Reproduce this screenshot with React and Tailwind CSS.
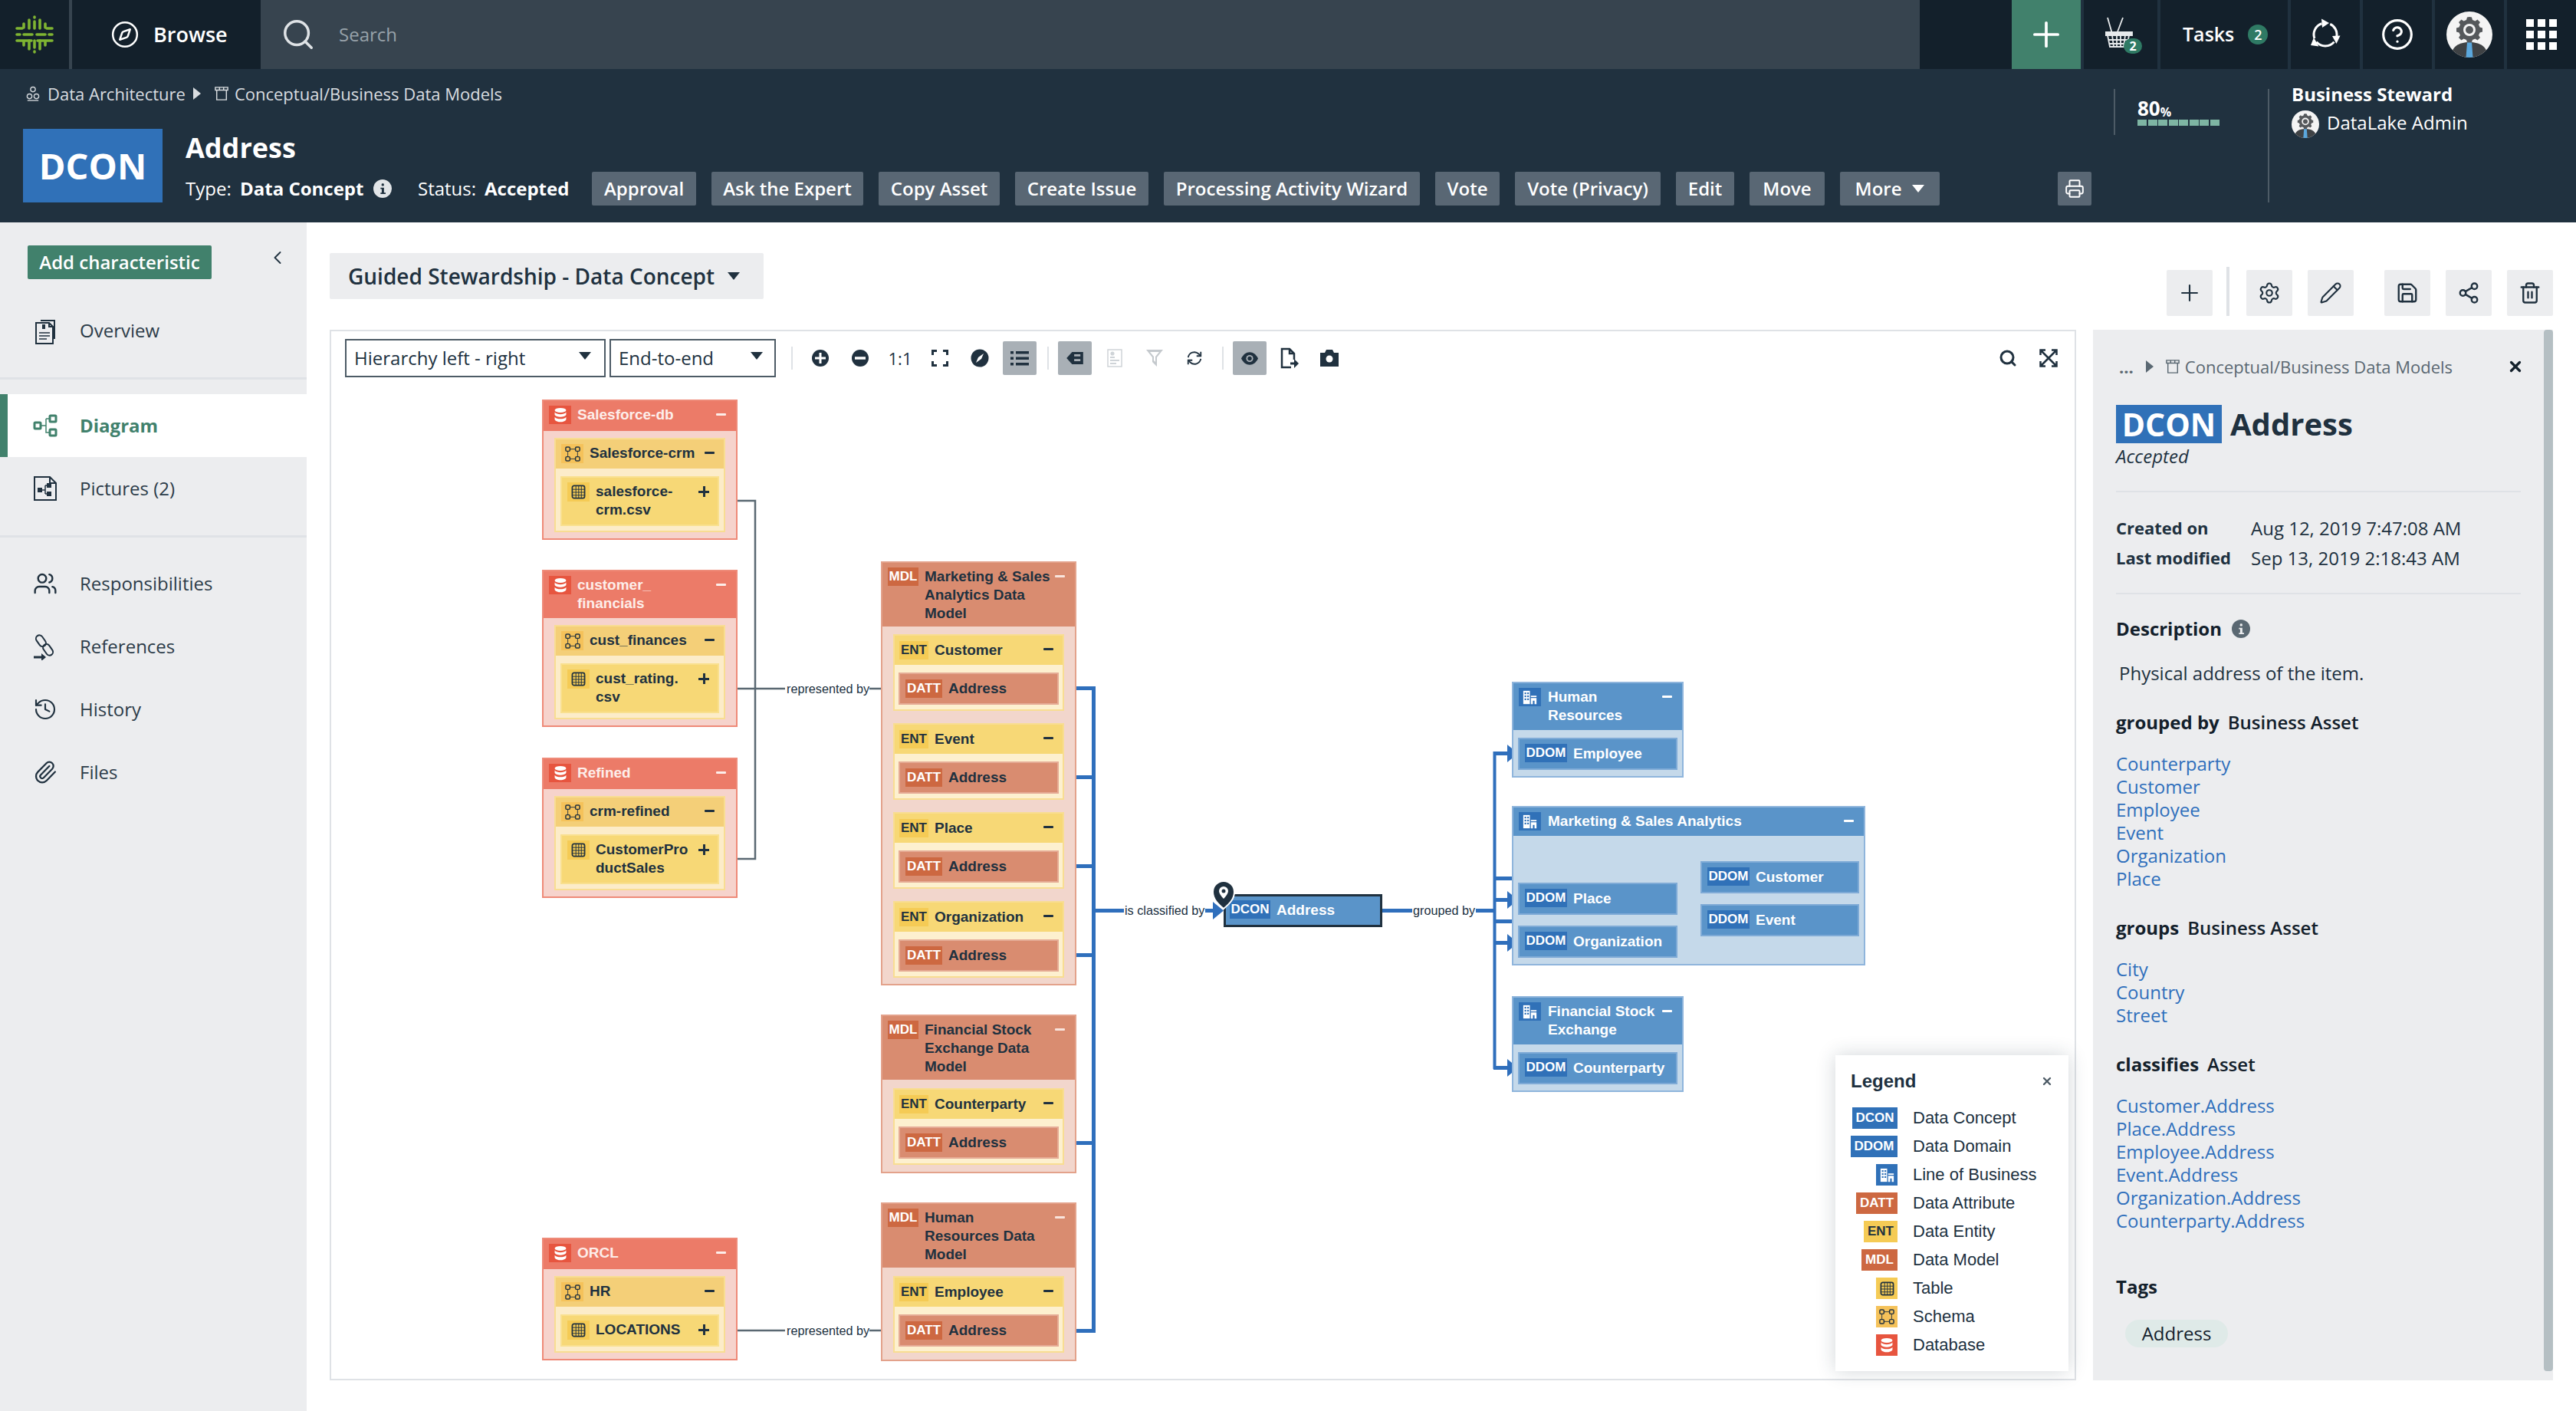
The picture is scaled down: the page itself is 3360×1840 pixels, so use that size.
import React from "react";
import {
  Compass, Search, Plus, CircleHelp, Printer, ChevronLeft, Settings, Pencil, Save, Share2, Trash2, X,
  Users, History, Paperclip,
} from "lucide-react";

const Dash = ({ cls }) => <span className={`block h-[3px] w-[13px] shrink-0 rounded-[1px] ${cls}`} />;

const CrossMark = ({ cls }) => (
  <span className={`relative block h-[14px] w-[14px] shrink-0 ${cls}`}>
    <span className="absolute left-0 top-[6px] h-[2.5px] w-[14px] bg-current" />
    <span className="absolute left-[6px] top-0 h-[14px] w-[2.5px] bg-current" />
  </span>
);

const DbGlyph = () => (
  <svg viewBox="0 0 20 24" className="h-[21px] w-[18px]">
    <g fill="#fff">
      <ellipse cx="10" cy="4.5" rx="8.5" ry="3.5" />
      <path d="M1.5 7.5c1.5 2 5 3 8.5 3s7-1 8.500-3v4c-1.500 2-5 3-8.500 3s-7-1-8.500-3z" />
      <path d="M1.500 14.500c1.500 2 5 3 8.500 3s7-1 8.500-3v4c-1.500 2.500-5 3.500-8.500 3.500s-7-1-8.500-3.500z" />
    </g>
  </svg>
);

const TableGlyph = () => (
  <svg viewBox="0 0 20 20" className="h-[19px] w-[19px]" fill="none" stroke="#20313f" strokeWidth="1">
    <rect x="1.500" y="1.500" width="17" height="17" rx="2.500" strokeWidth="1.800" />
    <path d="M1.500 6.500h17M1.500 10.500h17M1.500 14.500h17M6.500 1.500v17M10.300 1.500v17M14 1.500v17" />
  </svg>
);

const SchemaGlyph = () => (
  <svg viewBox="0 0 22 22" className="h-[20px] w-[20px]" fill="none" stroke="#20313f" strokeWidth="1.600">
    <rect x="1" y="1" width="6" height="6" rx="1.500" />
    <rect x="15" y="1" width="6" height="6" rx="1.500" />
    <rect x="1" y="15" width="6" height="6" rx="1.500" />
    <rect x="15" y="15" width="6" height="6" rx="1.500" />
    <path d="M7 4h8M7 18h8M4 7v8M18 7v8" strokeWidth="1" />
  </svg>
);

const LobGlyph = () => (
  <svg viewBox="0 0 22 22" className="h-[19px] w-[19px]" fill="#fff">
    <path d="M1 1h10v20H1z" />
    <path d="M12.500 8.500H21v2h-8.500zM12.500 12H21v9h-3v-5h-2.500v5h-3z" />
    <g fill="#3071b8">
      <rect x="3" y="3.500" width="2.500" height="2.500" />
      <rect x="7" y="3.500" width="2.500" height="2.500" />
      <rect x="3" y="8" width="2.500" height="2.500" />
      <rect x="7" y="8" width="2.500" height="2.500" />
      <rect x="3" y="12.500" width="2.500" height="2.500" />
      <rect x="7" y="12.500" width="2.500" height="2.500" />
    </g>
  </svg>
);

const Lines = ({ items }) => items.map((l) => <div key={l} className="whitespace-nowrap">{l}</div>);

const DbNode = ({ pos, lines, schema, table }) => (
  <div className={`absolute ${pos} w-[255px] border-2 border-[#ee8a78] bg-[#f6d3cc]`}>
    <div className="flex min-h-[39px] items-start bg-[#ec7b68] pb-[7px] pl-[7px] pr-[13px] pt-[6px]">
      <span className="flex h-[24px] w-[29px] shrink-0 items-center justify-center bg-[#e7553f]"><DbGlyph /></span>
      <div className="ml-[8px] flex-1 text-[19px] font-bold leading-[24px] text-[#fdeeea]"><Lines items={lines} /></div>
      <Dash cls="mt-[10px] bg-[#fdeeea]" />
    </div>
    <div className="px-[14px] pb-[8px] pt-[9px]">
      <div className="border-2 border-[#f8dd92] bg-[#fcecc9]">
        <div className="flex h-[38px] items-start bg-[#f4cf78] pl-[7px] pr-[12px] pt-[6px]">
          <span className="flex h-[25px] w-[29px] shrink-0 items-center justify-center bg-[#f5c25a]"><SchemaGlyph /></span>
          <span className="ml-[8px] flex-1 whitespace-nowrap text-[19px] font-bold leading-[24px] text-[#20313f]">{schema}</span>
          <Dash cls="mt-[10px] bg-[#20313f]" />
        </div>
        <div className="px-[6px] pb-[6px] pt-[10px]">
          <div className="flex items-start border-2 border-[#f9e08f] bg-[#f7d876] pb-[7px] pl-[7px] pr-[11px] pt-[6px]">
            <span className="flex h-[25px] w-[29px] shrink-0 items-center justify-center bg-[#f5cb55]"><TableGlyph /></span>
            <div className="ml-[8px] flex-1 text-[19px] font-bold leading-[24px] text-[#20313f]"><Lines items={table} /></div>
            <CrossMark cls="mt-[5px] text-[#20313f]" />
          </div>
        </div>
      </div>
    </div>
  </div>
);

const Ent = ({ name }) => (
  <div className="border-2 border-[#f8dd92] bg-[#fdf0cf]">
    <div className="flex h-[38px] items-start bg-[#f7d876] pl-[6px] pr-[12px] pt-[7px]">
      <span className="flex h-[24px] w-[38px] shrink-0 items-center justify-center bg-[#f5cb55] text-[17px] font-bold text-[#20313f]">ENT</span>
      <span className="ml-[8px] flex-1 text-[19px] font-bold leading-[23px] text-[#20313f]">{name}</span>
      <Dash cls="mt-[9px] bg-[#20313f]" />
    </div>
    <div className="px-[5px] pb-[6px] pt-[10px]">
      <div className="flex h-[42px] items-start border-2 border-[#e5ab95] bg-[#d98c70] pl-[7px] pt-[7px]">
        <span className="flex h-[24px] w-[48px] shrink-0 items-center justify-center bg-[#cd6841] text-[17px] font-bold text-white">DATT</span>
        <span className="ml-[8px] text-[19px] font-bold leading-[23px] text-[#20313f]">Address</span>
      </div>
    </div>
  </div>
);

const MdlNode = ({ pos, lines, ents, bodyCls }) => (
  <div className={`absolute ${pos} w-[255px] border-2 border-[#e3a28b] bg-[#f2d6cc]`}>
    <div className="flex items-start bg-[#d98c70] pb-[5px] pl-[7px] pr-[13px] pt-[6px]">
      <span className="flex h-[24px] w-[40px] shrink-0 items-center justify-center bg-[#cd6841] text-[17px] font-bold text-white">MDL</span>
      <div className="ml-[8px] flex-1 text-[19px] font-bold leading-[24px] text-[#20313f]"><Lines items={lines} /></div>
      <Dash cls="mt-[10px] bg-[#f9e4dc]" />
    </div>
    <div className={`flex flex-col gap-[16px] px-[14px] pb-[8px] pt-[10px] ${bodyCls}`}>
      {ents.map((e) => <Ent key={e} name={e} />)}
    </div>
  </div>
);

const Ddom = ({ name, cls }) => (
  <div className={`flex h-[42px] items-start border-2 border-[#7eaad6] bg-[#5a94c9] pl-[7px] pt-[6px] ${cls}`}>
    <span className="flex h-[24px] w-[55px] shrink-0 items-center justify-center bg-[#3071b8] text-[17px] font-bold text-white">DDOM</span>
    <span className="ml-[8px] text-[19px] font-bold leading-[25px] text-white">{name}</span>
  </div>
);

const LobHead = ({ lines }) => (
  <div className="flex items-start bg-[#5a94c9] pb-[7px] pl-[7px] pr-[13px] pt-[6px]">
    <span className="flex h-[24px] w-[29px] shrink-0 items-center justify-center bg-[#3071b8]"><LobGlyph /></span>
    <div className="ml-[9px] flex-1 text-[19px] font-bold leading-[24px] text-white"><Lines items={lines} /></div>
    <Dash cls="mt-[10px] bg-white" />
  </div>
);

const LobNode = ({ pos, lines, item }) => (
  <div className={`absolute ${pos} w-[224px] border-2 border-[#8fb5dc] bg-[#c5d9ea]`}>
    <LobHead lines={lines} />
    <div className="px-[6px] pb-[8px] pt-[10px]"><Ddom name={item} cls="w-[208px]" /></div>
  </div>
);

const Edges = () => (
  <svg viewBox="432 432 2274 1366" className="absolute left-0 top-0 h-[1366px] w-[2274px]" fill="none">
    <g stroke="#5a6872" strokeWidth="2.500">
      <path d="M938 653H985V1120H938" />
      <path d="M938 898H1024M1134 898H1160" />
      <path d="M938 1735H1024M1134 1735H1160" />
    </g>
    <g fill="#5a6872">
      <path d="M1157 888L1172 898L1157 908Z" />
      <path d="M1157 1725L1172 1735L1157 1745Z" />
    </g>
    <g fill="#2f6fbc">
      <rect x="1380" y="895" width="48" height="5" />
      <rect x="1380" y="1011" width="48" height="5" />
      <rect x="1380" y="1127" width="48" height="5" />
      <rect x="1380" y="1243" width="48" height="5" />
      <rect x="1380" y="1488" width="48" height="5" />
      <rect x="1380" y="1733" width="48" height="5" />
      <rect x="1424" y="895" width="5" height="843" />
      <rect x="1427" y="1185" width="39" height="5" />
      <rect x="1572" y="1185" width="12" height="5" />
      <path d="M1582 1176L1596 1187.500L1582 1199Z" />
      <rect x="1803" y="1185" width="39" height="5" />
      <rect x="1925" y="1185" width="25" height="5" />
      <rect x="1947.500" y="980" width="4" height="414" />
      <rect x="1948" y="980" width="20" height="5" />
      <path d="M1966 971L1980 982.500L1966 994Z" />
      <rect x="1948" y="1171" width="20" height="5" />
      <path d="M1966 1162L1980 1173.500L1966 1185Z" />
      <rect x="1948" y="1227" width="20" height="5" />
      <path d="M1966 1218L1980 1229.500L1966 1241Z" />
      <rect x="1948" y="1390" width="20" height="5" />
      <path d="M1966 1381L1980 1392.500L1966 1404Z" />
      <rect x="1948" y="1143" width="258" height="5" />
      <path d="M2204 1134L2218 1145.500L2204 1157Z" />
      <rect x="1948" y="1199" width="258" height="5" />
      <path d="M2204 1190L2218 1201.500L2204 1213Z" />
    </g>
    <g fontSize="16.200" fill="#20313f" stroke="none">
      <text x="1026" y="904">represented by</text>
      <text x="1026" y="1741">represented by</text>
      <text x="1467" y="1193">is classified by</text>
      <text x="1843" y="1193">grouped by</text>
    </g>
  </svg>
);

const LegendBadge = ({ cls, children }) => (
  <span className={`flex h-[28px] items-center justify-center text-[17px] font-bold ${cls}`}>{children}</span>
);

const Legend = () => {
  const rows = [
    ["Data Concept", <LegendBadge cls="w-[59px] bg-[#3071b8] text-white">DCON</LegendBadge>],
    ["Data Domain", <LegendBadge cls="w-[61px] bg-[#3071b8] text-white">DDOM</LegendBadge>],
    ["Line of Business", <LegendBadge cls="w-[28px] bg-[#3071b8]"><LobGlyph /></LegendBadge>],
    ["Data Attribute", <LegendBadge cls="w-[54px] bg-[#cd6841] text-white">DATT</LegendBadge>],
    ["Data Entity", <LegendBadge cls="w-[44px] bg-[#f5cb55] text-[#20313f]">ENT</LegendBadge>],
    ["Data Model", <LegendBadge cls="w-[47px] bg-[#cd6841] text-white">MDL</LegendBadge>],
    ["Table", <LegendBadge cls="w-[28px] bg-[#f5cb55]"><TableGlyph /></LegendBadge>],
    ["Schema", <LegendBadge cls="w-[28px] bg-[#f5c25a]"><SchemaGlyph /></LegendBadge>],
    ["Database", <LegendBadge cls="w-[28px] bg-[#e7553f]"><DbGlyph /></LegendBadge>],
  ];
  return (
    <div className="absolute left-[1962px] top-[944px] h-[412px] w-[304px] bg-white px-[20px] pt-[19px] shadow-[0_0_24px_rgba(32,49,63,0.2)]">
      <div className="flex items-center justify-between">
        <span className="text-[24px] font-bold leading-[30px] text-[#20313f]">Legend</span>
        <X size={16} strokeWidth={3.500} className="text-[#4d5b66]" />
      </div>
      <div className="mt-[19px] flex flex-col gap-[9px]">
        {rows.map(([t, b]) => (
          <div key={t} className="flex h-[28px] items-center">
            <div className="flex w-[61px] justify-end">{b}</div>
            <span className="ml-[20px] text-[22px] leading-[28px] text-[#20313f]">{t}</span>
          </div>
        ))}
      </div>
    </div>
  );
};

const Canvas = () => (
  <div className="font-['Liberation_Sans',Arial,sans-serif]">
    <Edges />
    <DbNode pos="left-[275px] top-[89px]" lines={["Salesforce-db"]} schema="Salesforce-crm" table={["salesforce-", "crm.csv"]} />
    <DbNode pos="left-[275px] top-[311px]" lines={["customer_", "financials"]} schema="cust_finances" table={["cust_rating.", "csv"]} />
    <DbNode pos="left-[275px] top-[556px]" lines={["Refined"]} schema="crm-refined" table={["CustomerPro", "ductSales"]} />
    <DbNode pos="left-[275px] top-[1182px]" lines={["ORCL"]} schema="HR" table={["LOCATIONS"]} />
    <MdlNode pos="left-[717px] top-[300px]" lines={["Marketing & Sales", "Analytics Data", "Model"]} ents={["Customer", "Event", "Place", "Organization"]} />
    <MdlNode pos="left-[717px] top-[891px]" bodyCls="pt-[11px] pb-[9px]" lines={["Financial Stock", "Exchange Data", "Model"]} ents={["Counterparty"]} />
    <MdlNode pos="left-[717px] top-[1136px]" bodyCls="pt-[11px] pb-[9px]" lines={["Human", "Resources Data", "Model"]} ents={["Employee"]} />
    <div className="absolute left-[1164px] top-[734px] flex h-[43px] w-[207px] items-start border-[3px] border-[#20313f] bg-[#5a94c9] pl-[5px] pt-[5px]">
      <span className="flex h-[24px] w-[53px] shrink-0 items-center justify-center bg-[#3071b8] text-[17px] font-bold text-white">DCON</span>
      <span className="ml-[8px] text-[19px] font-bold leading-[25px] text-white">Address</span>
    </div>
    <svg viewBox="0 0 30 38" className="absolute left-[1149px] top-[716px] h-[38px] w-[30px]">
      <path d="M15 37C8 31 1 25 1 15a14 14 0 0 1 28 0c0 10-7 16-14 22z" fill="#20313f" stroke="#fff" strokeWidth="2" />
      <path d="M15 8a6 6 0 0 0-6 6c0 4 6 10 6 10s6-6 6-10a6 6 0 0 0-6-6z" fill="#fff" />
      <circle cx="15" cy="14" r="2.500" fill="#20313f" />
    </svg>
    <LobNode pos="left-[1540px] top-[457px]" lines={["Human", "Resources"]} item="Employee" />
    <div className="absolute left-[1540px] top-[619px] w-[461px] border-2 border-[#8fb5dc] bg-[#c5d9ea]">
      <LobHead lines={["Marketing & Sales Analytics"]} />
      <div className="flex h-[167px] pl-[6px]">
        <div className="flex w-[208px] flex-col gap-[14px] pt-[61px]">
          <Ddom name="Place" />
          <Ddom name="Organization" />
        </div>
        <div className="ml-[30px] flex w-[207px] flex-col gap-[14px] pt-[33px]">
          <Ddom name="Customer" />
          <Ddom name="Event" />
        </div>
      </div>
    </div>
    <LobNode pos="left-[1540px] top-[867px]" lines={["Financial Stock", "Exchange"]} item="Counterparty" />
    <Legend />
  </div>
);

const Avatar = ({ cls }) => (
  <svg viewBox="0 0 60 60" className={cls}>
    <defs>
      <clipPath id="avc"><ellipse cx="30" cy="30" rx="30" ry="30" /></clipPath>
    </defs>
    <g clipPath="url(#avc)">
      <rect width="60" height="60" fill="#f4f4f4" />
      <path d="M6 60c0-14 10-20 24-20s24 6 24 20z" fill="#3f4245" />
      <path d="M27 40h6l1.500 20h-9z" fill="#5ba7dc" />
      <path d="M30 7l3 .5 1 3.500 3.500 1.500 3-2 3.500 3.500-2 3 1.500 3.500 3.500 1v5l-3.500 1-1.500 3.500 2 3-3.500 3.500-3-2-3.500 1.500-1 3.500h-6l-1-3.500-3.500-1.500-3 2-3.500-3.500 2-3-1.500-3.500-3.500-1v-5l3.500-1 1.500-3.500-2-3 3.500-3.500 3 2 3.500-1.500 1-3.500z" fill="#55585b" />
      <circle cx="30" cy="24" r="8" fill="#f4f4f4" />
      <circle cx="30" cy="24" r="5" fill="#55585b" />
    </g>
  </svg>
);

const Logo = () => (
  <svg viewBox="0 0 50 50" className="h-[50px] w-[50px]" fill="none" stroke="#7fb432" strokeWidth="3.600" strokeLinecap="round">
    <path d="M25 2v1M25 8v9M18 6v11M32 6v11M11 11v5M39 11v5" />
    <path d="M25 33v9M25 47v1M18 33v11M32 33v11M11 34v5M39 34v5" />
    <path d="M2 17h7M41 17h7M2 25h4M11 25h11M28 25h11M44 25h4M2 33h19M29 33h19" />
  </svg>
);

const Basket = () => (
  <svg viewBox="0 0 40 50" className="h-[50px] w-[40px]" fill="none" stroke="#e7eaec" strokeWidth="1.800">
    <path d="M9 24L3 3M15 24L23 3" strokeWidth="1.800" />
    <path d="M0 22h35v4H0z" fill="#e7eaec" />
    <path d="M3 26l3 15h22l3-15M9 26l2 15M15 26v15M20 26v15M26 26l-2 15M4 32h27M5 37h25" />
  </svg>
);

const Cycle = () => (
  <svg viewBox="0 0 40 44" className="h-[44px] w-[40px]" fill="none" stroke="#fff" strokeWidth="3">
    <path d="M5.900 27.100A15 15 0 0 1 15.500 7.700" />
    <path d="M26.300 8.400A15 15 0 0 1 34.800 24.600" />
    <path d="M31.500 31.600A15 15 0 0 1 8.500 31.600" />
    <path d="M15 1.500L25 7 16 13z" fill="#fff" stroke="none" />
    <path d="M29 24L39.500 23.500 34.500 34z" fill="#fff" stroke="none" />
    <path d="M11.500 37.500L1 36 5 26z" fill="#fff" stroke="none" />
  </svg>
);

const Grid9 = () => (
  <div className="grid grid-cols-3 gap-[5px]">
    {[1, 2, 3, 4, 5, 6, 7, 8, 9].map((i) => <span key={i} className="block h-[10px] w-[10px] bg-white" />)}
  </div>
);

const TopBar = () => (
  <div className="flex h-[90px] bg-[#37444f] text-white">
    <div className="flex w-[90px] items-center justify-center bg-[#13202b]"><Logo /></div>
    <div className="ml-[4px] flex w-[246px] items-center bg-[#13202b] pl-[50px]">
      <Compass size={38} strokeWidth={1.600} />
      <span className="ml-[18px] text-[27px] font-semibold">Browse</span>
    </div>
    <div className="ml-[4px] flex w-[2160px] items-center pl-[22px]">
      <Search size={46} strokeWidth={1.800} className="text-[#dfe3e6]" />
      <span className="ml-[30px] text-[24px] text-[#97a2aa]">Search</span>
    </div>
    <div className="flex flex-1 gap-[4px] bg-[#20313f]">
      <div className="-mr-[4px] w-[120px] bg-[#13202b]" />
      <div className="flex w-[90px] items-center justify-center bg-[#41816c]"><Plus size={52} strokeWidth={1.700} /></div>
      <div className="relative flex w-[96px] items-center justify-center bg-[#13202b]">
        <Basket />
        <span className="absolute left-[52px] top-[50px] flex h-[20px] w-[24px] items-center justify-center rounded-full bg-[#2f7a64] text-[16px] font-bold">2</span>
      </div>
      <div className="flex w-[166px] items-center bg-[#13202b] pl-[29px]">
        <span className="text-[25px] font-semibold">Tasks</span>
        <span className="ml-[18px] flex h-[26px] w-[26px] items-center justify-center rounded-full bg-[#2f7a64] text-[18px] font-semibold">2</span>
      </div>
      <div className="flex w-[90px] items-center justify-center bg-[#13202b]"><Cycle /></div>
      <div className="flex w-[90px] items-center justify-center bg-[#13202b]"><CircleHelp size={44} strokeWidth={1.700} /></div>
      <div className="flex w-[90px] items-center justify-center bg-[#13202b]"><Avatar cls="h-[60px] w-[60px]" /></div>
      <div className="flex w-[90px] items-center justify-center bg-[#13202b]"><Grid9 /></div>
    </div>
  </div>
);

const TinyCommunity = () => (
  <svg viewBox="0 0 20 24" className="h-[22px] w-[18px]" fill="none" stroke="#d4d8dc" strokeWidth="1.500">
    <circle cx="10" cy="6" r="3.500" />
    <circle cx="5" cy="16" r="3.500" />
    <circle cx="15" cy="16" r="3.500" />
    <path d="M2 22h16" />
  </svg>
);

const TinyDomain = ({ stroke }) => (
  <svg viewBox="0 0 20 22" className="h-[22px] w-[18px]" fill="none" stroke={stroke} strokeWidth="1.600">
    <path d="M3 6v14h14V6M1 2h18v4H1zM7 2v4h6V2" />
  </svg>
);

const HeaderButton = ({ children, cls }) => (
  <span className={`flex h-[44px] items-center justify-center whitespace-nowrap rounded-[2px] bg-[#596774] text-[24px] font-semibold text-white ${cls}`}>{children}</span>
);

const InfoDot = ({ cls, fg }) => (
  <span className={`flex h-[24px] w-[24px] shrink-0 items-center justify-center rounded-full ${cls}`}>
    <svg viewBox="0 0 12 12" className="h-[16px] w-[16px]" fill={fg}>
      <rect x="5" y="1" width="2.400" height="2.400" rx="1" />
      <path d="M4 5h3.400v5H9v1.300H4V10h1.200V6.300H4z" />
    </svg>
  </span>
);

const Header = () => (
  <div className="flex h-[200px] bg-[#20313f] text-white">
    <div className="w-[2757px]">
      <div className="ml-[34px] mt-[10px] flex h-[44px] items-center text-[22px] text-[#d9dde0]">
        <TinyCommunity />
        <span className="ml-[10px]">Data Architecture</span>
        <svg viewBox="0 0 10 16" className="ml-[10px] h-[18px] w-[10px]" fill="#d9dde0"><path d="M0 0l10 8-10 8z" /></svg>
        <span className="ml-[18px]"><TinyDomain stroke="#d9dde0" /></span>
        <span className="ml-[8px]">Conceptual/Business Data Models</span>
      </div>
      <div className="ml-[30px] mt-[24px] flex">
        <div className="flex h-[96px] w-[182px] items-center justify-center bg-[#3071b8] text-[47px] font-bold leading-none">DCON</div>
        <div className="ml-[30px]">
          <div className="flex h-[50px] items-center text-[36px] font-bold leading-none">Address</div>
          <div className="mt-[6px] flex h-[44px] items-center whitespace-nowrap text-[24px]">
            <span className="w-[71px]">Type:</span>
            <span className="w-[174px] font-bold">Data Concept</span>
            <InfoDot cls="bg-[#e2e5e8]" fg="#20313f" />
            <span className="ml-[34px] w-[87px]">Status:</span>
            <span className="w-[110px] font-bold">Accepted</span>
            <HeaderButton cls="ml-[30px] w-[136px]">Approval</HeaderButton>
            <HeaderButton cls="ml-[20px] w-[198px]">Ask the Expert</HeaderButton>
            <HeaderButton cls="ml-[20px] w-[158px]">Copy Asset</HeaderButton>
            <HeaderButton cls="ml-[20px] w-[174px]">Create Issue</HeaderButton>
            <HeaderButton cls="ml-[20px] w-[334px]">Processing Activity Wizard</HeaderButton>
            <HeaderButton cls="ml-[20px] w-[84px]">Vote</HeaderButton>
            <HeaderButton cls="ml-[20px] w-[190px]">Vote (Privacy)</HeaderButton>
            <HeaderButton cls="ml-[20px] w-[76px]">Edit</HeaderButton>
            <HeaderButton cls="ml-[20px] w-[98px]">Move</HeaderButton>
            <HeaderButton cls="ml-[20px] w-[130px] gap-[14px]">
              More
              <svg viewBox="0 0 16 10" className="h-[10px] w-[16px]" fill="#fff"><path d="M0 0h16L8 10z" /></svg>
            </HeaderButton>
            <span className="ml-[154px] flex h-[44px] w-[44px] items-center justify-center rounded-[2px] bg-[#596774]"><Printer size={26} strokeWidth={1.800} /></span>
          </div>
        </div>
      </div>
    </div>
    <div className="mt-[26px] h-[60px] w-[2px] bg-[#4d5b66]" />
    <div className="ml-[29px] mt-[36px] w-[170px]">
      <div className="flex h-[28px] items-end text-[26px] font-bold leading-none">80<span className="text-[16px]">%</span></div>
      <div className="mt-[2px] flex gap-[1.500px]">
        {[1, 2, 3, 4, 5, 6, 7, 8].map((i) => <span key={i} className="block h-[8px] w-[12px] bg-[#7eb5a3]" />)}
      </div>
    </div>
    <div className="mt-[26px] h-[148px] w-[2px] bg-[#4d5b66]" />
    <div className="ml-[29px] mt-[17px]">
      <div className="flex h-[32px] items-center text-[24px] font-bold">Business Steward</div>
      <div className="mt-[5px] flex items-start">
        <Avatar cls="h-[36px] w-[36px]" />
        <span className="ml-[10px] flex h-[32px] items-center text-[24px]">DataLake Admin</span>
      </div>
    </div>
  </div>
);

const IconDoc = () => (
  <svg viewBox="0 0 28 36" className="h-[36px] w-[28px]" fill="none" stroke="#20313f" strokeWidth="2">
    <path d="M8 5h18v24M2 8h17l5 5v22H2zM19 8v5h5" />
    <path d="M6 21h14M6 25h14M6 29h10" strokeWidth="1.500" />
    <path d="M10 10h4v6h-4z" fill="#20313f" stroke="none" />
  </svg>
);
const IconFlow = ({ stroke, sw = 2 }) => (
  <svg viewBox="0 0 32 30" className="h-[30px] w-[32px]" fill="none" stroke={stroke} strokeWidth={sw + 1}>
    <rect x="2" y="11" width="8" height="8" rx="1" />
    <rect x="22" y="2" width="8" height="8" rx="1" />
    <rect x="22" y="20" width="8" height="8" rx="1" />
    <path d="M10 15h7M17 6v18h5M17 6h5" strokeWidth="1.500" />
  </svg>
);
const IconPic = () => (
  <svg viewBox="0 0 32 34" className="h-[34px] w-[32px]" fill="none" stroke="#20313f" strokeWidth="2">
    <path d="M2 2h20l8 8v22H2zM22 2v8h8" />
    <rect x="7" y="17" width="4" height="4" fill="#20313f" />
    <rect x="19" y="11" width="4" height="4" fill="#20313f" />
    <rect x="19" y="22" width="4" height="4" fill="#20313f" />
    <path d="M11 19h5M16 13v11M16 13h3M16 24h3" strokeWidth="1.500" />
  </svg>
);
const IconRef = () => (
  <svg viewBox="0 0 32 36" className="h-[36px] w-[32px]" fill="none" stroke="#20313f" strokeWidth="2">
    <rect x="6" y="3" width="9" height="16" rx="4.500" transform="rotate(-35 10 11)" />
    <rect x="15" y="14" width="9" height="16" rx="4.500" transform="rotate(-35 20 22)" />
    <path d="M1 32h12" strokeWidth="3" />
    <path d="M11 27l6 5-6 5z" fill="#20313f" stroke="none" />
  </svg>
);

const NavRow = ({ icon, label, active }) => (
  <div className={`flex h-[82px] items-center ${active ? "border-l-[10px] border-[#41816c] bg-white" : ""}`}>
    <span className={`flex w-[32px] items-center justify-center ${active ? "ml-[33px]" : "ml-[43px]"}`}>{icon}</span>
    <span className={`ml-[29px] text-[24px] ${active ? "font-bold text-[#41816c]" : "text-[#2c3c49]"}`}>{label}</span>
  </div>
);

const Sidebar = () => (
  <div className="h-full w-[400px] shrink-0 bg-[#ecedef] pt-[30px]">
    <div className="flex h-[44px] items-center">
      <span className="ml-[36px] flex h-[44px] w-[240px] items-center justify-center rounded-[2px] bg-[#41816c] text-[24px] font-semibold text-white">Add characteristic</span>
      <ChevronLeft size={28} strokeWidth={1.600} className="ml-[72px] -mt-[12px] text-[#20313f]" />
    </div>
    <div className="mt-[26px]"><NavRow icon={<IconDoc />} label="Overview" /></div>
    <div className="mb-[19px] mt-[20px] h-[3px] bg-[#dfe2e6]" />
    <NavRow active icon={<IconFlow stroke="#41816c" />} label="Diagram" />
    <NavRow icon={<IconPic />} label="Pictures (2)" />
    <div className="mb-[19px] mt-[20px] h-[3px] bg-[#dfe2e6]" />
    <NavRow icon={<Users size={32} strokeWidth={1.800} className="text-[#20313f]" />} label="Responsibilities" />
    <NavRow icon={<IconRef />} label="References" />
    <NavRow icon={<History size={32} strokeWidth={1.600} className="text-[#20313f]" />} label="History" />
    <NavRow icon={<Paperclip size={34} strokeWidth={1.700} className="text-[#20313f]" />} label="Files" />
  </div>
);

const ActionBtn = ({ cls, children }) => (
  <span className={`flex h-[60px] w-[60px] items-center justify-center rounded-[2px] bg-[#ecedef] text-[#20313f] ${cls}`}>{children}</span>
);

const Caret = ({ cls }) => (
  <svg viewBox="0 0 16 10" className={`absolute top-[15px] h-[10px] w-[18px] ${cls}`} fill="#20313f"><path d="M0 0h16L8 10z" /></svg>
);

const Tool = ({ active, children }) => (
  <span className={`flex h-[44px] w-[44px] items-center justify-center rounded-[2px] ${active ? "bg-[#a9b0b6]" : ""}`}>{children}</span>
);

const Sep = ({ cls }) => <span className={`block h-[30px] w-[2px] bg-[#dfe2e6] ${cls}`} />;

const Toolbar = () => (
  <div className="flex h-[50px] items-center pl-[18px]">
    <div className="relative flex h-[50px] w-[340px] items-center border-2 border-[#4d5b66] pl-[10px] text-[24px] text-[#20313f]">
      Hierarchy left - right
      <Caret cls="right-[16px]" />
    </div>
    <div className="relative ml-[5px] flex h-[50px] w-[217px] items-center border-2 border-[#4d5b66] pl-[10px] text-[24px] text-[#20313f]">
      End-to-end
      <Caret cls="right-[14px]" />
    </div>
    <Sep cls="ml-[20px]" />
    <div className="ml-[14px] flex items-center gap-[8px]">
      <Tool>
        <svg viewBox="0 0 24 24" className="h-[24px] w-[24px]"><circle cx="12" cy="12" r="11" fill="#20313f" /><path d="M12 5v14M5 12h14" stroke="#fff" strokeWidth="3" /></svg>
      </Tool>
      <Tool>
        <svg viewBox="0 0 24 24" className="h-[24px] w-[24px]"><circle cx="12" cy="12" r="11" fill="#20313f" /><path d="M5 12h14" stroke="#fff" strokeWidth="3.500" /></svg>
      </Tool>
      <Tool><span className="text-[22px] leading-none text-[#20313f]">1:1</span></Tool>
      <Tool>
        <svg viewBox="0 0 22 22" className="h-[22px] w-[22px]" fill="none" stroke="#20313f" strokeWidth="3"><path d="M1.500 7V1.500H7M15 1.500h5.500V7M20.500 15v5.500H15M7 20.500H1.500V15" /></svg>
      </Tool>
      <Tool>
        <svg viewBox="0 0 24 24" className="h-[24px] w-[24px]"><circle cx="12" cy="12" r="11.500" fill="#20313f" /><path d="M17 6l-7 5-3 7 7-5z" fill="#fff" /></svg>
      </Tool>
      <Tool active>
        <svg viewBox="0 0 24 20" className="h-[20px] w-[24px]" fill="#20313f"><rect x="0" y="1" width="4" height="3.500" /><rect x="7" y="1" width="17" height="3.500" /><rect x="0" y="8.500" width="4" height="3.500" /><rect x="7" y="8.500" width="17" height="3.500" /><rect x="0" y="16" width="4" height="3.500" /><rect x="7" y="16" width="17" height="3.500" /></svg>
      </Tool>
    </div>
    <Sep cls="ml-[14px]" />
    <div className="ml-[12px] flex items-center gap-[8px]">
      <Tool active>
        <svg viewBox="0 0 24 20" className="h-[18px] w-[22px]"><path d="M8 1h16v18H8L0 10z" fill="#20313f" /><path d="M11 6h9M11 13h9" stroke="#a9b0b6" strokeWidth="3" /></svg>
      </Tool>
      <Tool>
        <svg viewBox="0 0 20 24" className="h-[24px] w-[20px]" fill="none" stroke="#cfd4d8" strokeWidth="1.500"><rect x="1" y="1" width="18" height="22" /><circle cx="7" cy="6" r="1.800" fill="#cfd4d8" /><path d="M4 11h6M4 15h12M4 19h8" strokeWidth="1.800" /></svg>
      </Tool>
      <Tool>
        <svg viewBox="0 0 22 24" className="h-[24px] w-[22px]" fill="#c4c9cd"><path d="M0 1h22l-8 10v12l-6-6v-6zM5 4l5 6v5l2 2v-7l5-6z" fillRule="evenodd" /></svg>
      </Tool>
      <Tool>
        <svg viewBox="0 0 24 24" className="h-[22px] w-[22px]" fill="none" stroke="#20313f" strokeWidth="2"><path d="M3 11a9 9 0 0 1 15-5l2 2M21 13a9 9 0 0 1-15 5l-2-2" /><path d="M21 3v6h-6M3 21v-6h6" /></svg>
      </Tool>
    </div>
    <Sep cls="ml-[14px]" />
    <div className="ml-[12px] flex items-center gap-[8px]">
      <Tool active>
        <svg viewBox="0 0 24 18" className="h-[17px] w-[22px]"><path d="M0 9c3-6 7-9 12-9s9 3 12 9c-3 6-7 9-12 9S3 15 0 9z" fill="#20313f" /><circle cx="12" cy="9" r="5" fill="#a9b0b6" /><circle cx="12" cy="9" r="3" fill="#20313f" /></svg>
      </Tool>
      <Tool>
        <svg viewBox="0 0 24 28" className="h-[28px] w-[24px]" fill="none" stroke="#20313f" strokeWidth="2.500"><path d="M14 26H2V2h10l6 6v8M12 2v6h6" /><path d="M13 21h6" strokeWidth="3" /><path d="M18 15l6 6-6 6z" fill="#20313f" stroke="none" /></svg>
      </Tool>
      <Tool>
        <svg viewBox="0 0 24 22" className="h-[22px] w-[24px]"><path d="M0 4h6l2-4h8l2 4h6v18H0z" fill="#20313f" /><circle cx="12" cy="12" r="4.500" fill="#fff" /></svg>
      </Tool>
    </div>
    <div className="ml-auto flex items-center">
      <Search size={24} strokeWidth={3} className="text-[#20313f]" />
      <svg viewBox="0 0 24 24" className="ml-[29px] mr-[22px] h-[24px] w-[24px]" fill="none" stroke="#20313f" strokeWidth="2.500">
        <path d="M2 2l20 20M22 2L2 22M1.500 8V1.500H8M16 1.500h6.500V8M22.500 16v6.500H16M8 22.500H1.500V16" />
      </svg>
    </div>
  </div>
);

const LinkList = ({ items, cls }) => (
  <div className={cls}>
    {items.map((t) => <div key={t} className="h-[30px] text-[24px] leading-[30px] text-[#2f6fbc]">{t}</div>)}
  </div>
);

const SectionHead = ({ cls, bold, rest }) => (
  <div className={`flex h-[36px] items-center text-[24px] font-bold text-[#13202b] ${cls}`}>
    {bold}
    <span className="ml-[11px] font-semibold">{rest}</span>
  </div>
);

const Panel = () => (
  <div className="relative ml-[22px] h-[1370px] w-[600px] shrink-0 bg-[#ecedef] pl-[30px] pr-[42px]">
    <div className="absolute bottom-[12px] right-0 top-0 w-[12px] rounded-[4px] bg-[#b5bfc3]" />
    <div className="flex h-[32px] translate-y-[32px] items-center text-[22px] text-[#5a6872]">
      <span className="ml-[4px] font-bold">...</span>
      <svg viewBox="0 0 10 16" className="ml-[16px] h-[16px] w-[10px]" fill="#5a6872"><path d="M0 0l10 8-10 8z" /></svg>
      <span className="ml-[16px]"><TinyDomain stroke="#5a6872" /></span>
      <span className="ml-[7px]">Conceptual/Business Data Models</span>
      <X size={22} strokeWidth={3.500} className="ml-auto mr-[-4px] text-[#13202b]" />
    </div>
    <div className="mt-[66px] flex h-[50px] items-center">
      <span className="flex h-[50px] w-[138px] items-center justify-center bg-[#3071b8] text-[41px] font-bold leading-none text-white">DCON</span>
      <span className="ml-[11px] text-[40px] font-bold leading-none text-[#20313f]">Address</span>
    </div>
    <div className="h-[34px] text-[24px] italic leading-[34px] text-[#20313f]">Accepted</div>
    <div className="mt-[28px] h-[2px] bg-[#dfe2e6]" />
    <div className="mt-[27px] text-[24px] text-[#20313f]">
      <div className="flex h-[39px] items-center"><span className="w-[176px] text-[22px] font-bold">Created on</span><span>Aug 12, 2019 7:47:08 AM</span></div>
      <div className="flex h-[39px] items-center"><span className="w-[176px] text-[22px] font-bold">Last modified</span><span>Sep 13, 2019 2:18:43 AM</span></div>
    </div>
    <div className="mt-[26px] h-[2px] bg-[#dfe2e6]" />
    <div className="mt-[27px] flex h-[36px] items-center text-[24px] font-bold text-[#13202b]">
      Description
      <InfoDot cls="ml-[13px] bg-[#5a6872]" fg="#ecedef" />
    </div>
    <div className="ml-[4px] mt-[22px] flex h-[36px] items-center text-[24px] text-[#20313f]">Physical address of the item.</div>
    <SectionHead cls="mt-[28px]" bold="grouped by" rest="Business Asset" />
    <LinkList cls="mt-[21px]" items={["Counterparty", "Customer", "Employee", "Event", "Organization", "Place"]} />
    <SectionHead cls="mt-[31px]" bold="groups" rest="Business Asset" />
    <LinkList cls="mt-[21px]" items={["City", "Country", "Street"]} />
    <SectionHead cls="mt-[31px]" bold="classifies" rest="Asset" />
    <LinkList cls="mt-[21px]" items={["Customer.Address", "Place.Address", "Employee.Address", "Event.Address", "Organization.Address", "Counterparty.Address"]} />
    <div className="mt-[53px] flex h-[36px] items-center text-[24px] font-bold text-[#13202b]">Tags</div>
    <div className="ml-[12px] mt-[25px] flex h-[36px] w-[134px] items-center justify-center rounded-full bg-[#dfeae8] text-[24px] text-[#13202b]">Address</div>
  </div>
);

const Content = () => (
  <div className="flex-1 px-[30px]">
    <div className="flex h-[140px] items-start justify-between">
      <div className="mt-[40px] flex h-[60px] w-[566px] items-center rounded-[2px] bg-[#ecedef] pl-[24px] text-[28px] font-semibold text-[#20313f]">
        Guided Stewardship - Data Concept
        <svg viewBox="0 0 16 10" className="ml-[17px] h-[10px] w-[16px]" fill="#20313f"><path d="M0 0h16L8 10z" /></svg>
      </div>
      <div className="mt-[58px] flex items-end">
        <ActionBtn><Plus size={34} strokeWidth={1.500} /></ActionBtn>
        <span className="ml-[18px] block h-[64px] w-[4px] bg-[#dfe2e6]" />
        <ActionBtn cls="ml-[22px]"><Settings size={30} strokeWidth={1.700} /></ActionBtn>
        <ActionBtn cls="ml-[20px]"><Pencil size={30} strokeWidth={1.700} /></ActionBtn>
        <ActionBtn cls="ml-[40px]"><Save size={30} strokeWidth={1.900} /></ActionBtn>
        <ActionBtn cls="ml-[20px]"><Share2 size={30} strokeWidth={1.900} /></ActionBtn>
        <ActionBtn cls="ml-[20px]"><Trash2 size={30} strokeWidth={1.900} /></ActionBtn>
      </div>
    </div>
    <div className="flex">
      <div className="relative h-[1370px] w-[2278px] shrink-0 border-2 border-[#dfe2e6] pt-[10px]">
        <Toolbar />
        <Canvas />
      </div>
      <Panel />
    </div>
  </div>
);

export default function App() {
  return (
    <div className="flex h-[1840px] w-[3360px] flex-col overflow-hidden bg-white font-['Open_Sans',sans-serif]">
      <TopBar />
      <Header />
      <div className="flex h-[1550px]">
        <Sidebar />
        <Content />
      </div>
    </div>
  );
}
